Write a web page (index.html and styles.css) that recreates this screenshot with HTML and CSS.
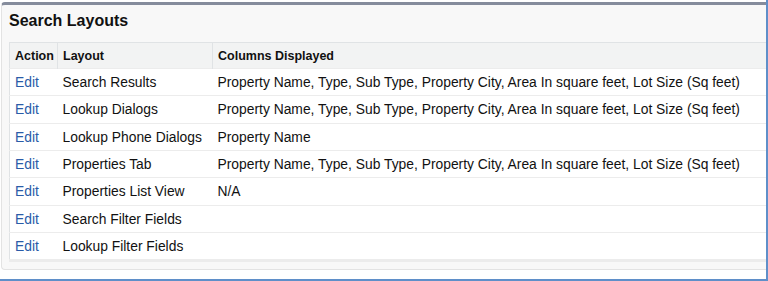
FILE: index.html
```html
<!DOCTYPE html>
<html>
<head>
<meta charset="utf-8">
<link rel="stylesheet" href="styles.css">
</head>
<body>
<div class="frame">
  <div class="panel">
    <h2 class="title">Search Layouts</h2>
    <table class="list">
      <thead>
        <tr>
          <th class="c-action">Action</th>
          <th class="c-layout">Layout</th>
          <th class="c-cols">Columns Displayed</th>
        </tr>
      </thead>
      <tbody>
        <tr><td><a class="edit" href="#">Edit</a></td><td>Search Results</td><td>Property Name, Type, Sub Type, Property City, Area In square feet, Lot Size (Sq feet)</td></tr>
        <tr><td><a class="edit" href="#">Edit</a></td><td>Lookup Dialogs</td><td>Property Name, Type, Sub Type, Property City, Area In square feet, Lot Size (Sq feet)</td></tr>
        <tr><td><a class="edit" href="#">Edit</a></td><td>Lookup Phone Dialogs</td><td>Property Name</td></tr>
        <tr><td><a class="edit" href="#">Edit</a></td><td>Properties Tab</td><td>Property Name, Type, Sub Type, Property City, Area In square feet, Lot Size (Sq feet)</td></tr>
        <tr><td><a class="edit" href="#">Edit</a></td><td>Properties List View</td><td>N/A</td></tr>
        <tr><td><a class="edit" href="#">Edit</a></td><td>Search Filter Fields</td><td></td></tr>
        <tr><td><a class="edit" href="#">Edit</a></td><td>Lookup Filter Fields</td><td></td></tr>
      </tbody>
    </table>
  </div>
</div>
</body>
</html>
```
FILE: styles.css
```css
html, body {
  margin: 0;
  padding: 0;
  background: #ffffff;
}
body {
  font-family: "Liberation Sans", Arial, sans-serif;
  color: #000;
}
.frame {
  width: 768px;
  height: 281px;
  box-sizing: border-box;
  border-right: 2px solid #5f8fc9;
  border-bottom: 2px solid #5f8fc9;
  padding: 2px 0 0 1px;
  overflow: hidden;
}
.panel {
  background: #f8f8f8;
  border-top: 3px solid #858c9c;
  border-left: 1px solid #e3e3e3;
  border-bottom: 1px solid #e3e3e3;
  border-radius: 4px 0 0 4px;
  padding: 0 0 7px 7px;
}
.title {
  margin: 0;
  height: 37px;
  line-height: 32px;
  font-size: 16px;
  font-weight: bold;
  padding-left: 0;
  color: #111;
}
.list {
  width: 100%;
  border-collapse: collapse;
  background: #fff;
  border-top: 1px solid #e0e3e5;
  border-left: 1px solid #e0e3e5;
  border-bottom: 3px solid #ececec;
  font-size: 13.85px;
}
.list th {
  background: #f2f3f3;
  text-align: left;
  font-weight: bold;
  font-size: 12.5px;
  height: 25px;
  padding: 0 0 0 5px;
  border-left: 1px solid #e0e3e5;
  color: #111;
}
.list th:first-child { border-left: none; }
.list td {
  height: 26.33px;
  padding: 0 0 0 5px;
  border-top: 1px solid #ececec;
  color: #111;
  white-space: nowrap;
}
.c-action { width: 42px; }
.c-layout { width: 149px; }
.edit {
  color: #2a5ba8;
  text-decoration: none;
}
```
